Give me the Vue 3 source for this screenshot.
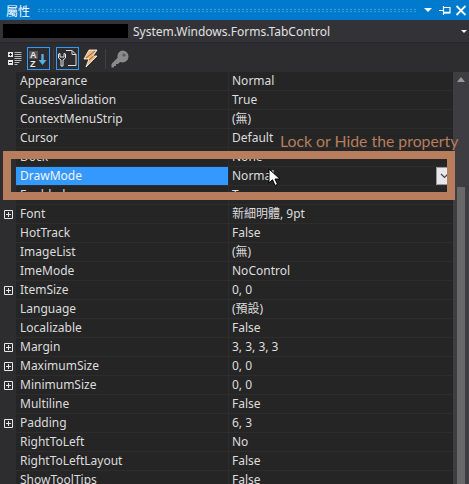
<script setup>
const rows = [
  ['Appearance', 'Normal'],
  ['CausesValidation', 'True'],
  ['ContextMenuStrip', '(無)'],
  ['Cursor', 'Default'],
  ['Dock', 'None'],
  ['DrawMode', 'Normal', false, true],
  ['Enabled', 'True'],
  ['Font', '新細明體, 9pt', true],
  ['HotTrack', 'False'],
  ['ImageList', '(無)'],
  ['ImeMode', 'NoControl'],
  ['ItemSize', '0, 0', true],
  ['Language', '(預設)'],
  ['Localizable', 'False'],
  ['Margin', '3, 3, 3, 3', true],
  ['MaximumSize', '0, 0', true],
  ['MinimumSize', '0, 0', true],
  ['Multiline', 'False'],
  ['Padding', '6, 3', true],
  ['RightToLeft', 'No'],
  ['RightToLeftLayout', 'False'],
  ['ShowToolTips', 'False'],
]
</script>

<template>
  <div class="panel">
    <header class="title">
      <span class="title-text">屬性</span>
      <span class="grip"></span>
      <svg class="tb-icons" width="42" height="13" viewBox="0 0 42 13">
        <path d="M0 4h8L4 8z" fill="#fff" />
        <path d="M15 6.500h4M19.500 2v9M19.500 3.500h6.500v5.500h-6.500" fill="none" stroke="#fff" stroke-width="1.200" />
        <path d="M20 8.500h6" stroke="#fff" stroke-width="1.500" />
        <path d="M32.500 2l9 9M41.500 2l-9 9" fill="none" stroke="#fff" stroke-width="1.800" />
      </svg>
    </header>
    <div class="combo">
      <span class="redact"></span>
      <span class="combo-text">System.Windows.Forms.TabControl</span>
      <svg class="combo-arrow" width="6" height="3" viewBox="0 0 6 3"><path d="M0 0h6L3 3z" fill="#f1f1f1" /></svg>
    </div>
    <div class="toolbar">
      <svg class="ico" width="16" height="16" viewBox="0 0 16 16">
        <path d="M0 1h5v5H0zM0 9h5v5H0z" fill="#e6e6e6" />
        <path d="M1 3.500h3M2.500 2v3M1 11.500h3" stroke="#222" />
        <path d="M6.500 1.500h7M6.500 3.500h7M6.500 5.500h7M6.500 7.500h7M6.500 9.500h7M6.500 11.500h5M6.500 13.500h3" stroke="#b8b8b8" />
      </svg>
      <span class="btn first">
        <svg width="19" height="18" viewBox="0 0 19 18">
          <rect x="0" y="1" width="9" height="8" fill="#555" />
          <text x="1" y="16" class="az">
            <tspan x="1" y="8">A</tspan>
            <tspan x="1" y="16.500">Z</tspan>
          </text>
          <path d="M13.500 4v7" stroke="#55aee8" stroke-width="2.400" />
          <path d="M9.500 10h8l-4 5z" fill="#55aee8" />
        </svg>
      </span>
      <i class="sep first-sep"></i>
      <span class="btn">
        <svg width="21" height="19" viewBox="0 0 21 19">
          <path d="M9 1.500h6l4 4v11h-8" fill="none" stroke="#ddd" />
          <path d="M15 1.500v4h4" fill="none" stroke="#ddd" />
          <path d="M1.500 5v4l2.500 2v6h2v-6L8.500 9V5L7 4.500v3.500H3V4.500z" fill="#2d2d30" stroke="#e6e6e6" />
        </svg>
      </span>
      <svg class="ico bolt" width="15" height="19" viewBox="0 0 15 19">
        <path d="M6 1h8l-4 6h4L3 18l3-8H1z" fill="#f2b774" stroke="#fff" stroke-width=".8" />
        <path d="M3 9l9-7M6 11l7-6" stroke="#2d2d30" stroke-width=".6" />
      </svg>
      <i class="sep"></i>
      <svg class="ico key" width="18" height="18" viewBox="0 0 18 18">
        <path d="M11.500 0.500a6 6 0 0 1 0 12c-.9 0-1.700-.2-2.400-.5L7 14H5v2H3v1.500H0.500V14l6-6.200a6 6 0 0 1 5-7.300z" fill="#8a8a8a" />
        <circle cx="13" cy="5" r="1.600" fill="#5a5a5a" />
      </svg>
    </div>
    <div class="body">
      <div class="grid">
        <div v-for="r in rows" :key="r[0]" class="row">
          <span class="gutter">
            <svg v-if="r[2]" width="9" height="9" viewBox="0 0 9 9">
              <path d="M.5.500h8v8h-8z" fill="none" stroke="#e6e6e6" />
              <path d="M2 4.500h5M4.500 2v5" stroke="#e6e6e6" />
            </svg>
          </span>
          <span class="name" :class="{ selected: r[3] }">{{ r[0] }}</span>
          <span class="value">{{ r[1] }}</span>
        </div>
        <span class="dropdown">
          <svg width="9" height="6" viewBox="0 0 9 6"><path d="M1 1l3.500 3.500L8 1" fill="none" stroke="#444" stroke-width="1.200" /></svg>
        </span>
      </div>
      <div class="scroll">
        <svg class="up" width="8" height="5" viewBox="0 0 8 5"><path d="M4 0L8 5H0z" fill="#999" /></svg>
        <div class="thumb"></div>
      </div>
      <div class="note-box"></div>
      <span class="note-text">Lock or Hide the property</span>
      <svg class="cursor" width="13" height="19" viewBox="0 0 13 19">
        <path d="M1 1v14l3.500-3.200L7 17.500l2.500-1.200L7 11h5z" fill="#fff" stroke="#000" />
      </svg>
    </div>
  </div>
</template>

<style>
html, body { margin: 0; background: #2d2d30; }
</style>

<style scoped>
.panel {
  width: 469px;
  height: 484px;
  overflow: hidden;
  background: #2d2d30;
  display: flex;
  flex-direction: column;
  font-family: "Noto Sans", "Noto Sans CJK TC", sans-serif;
  font-size: 12px;
  color: #f1f1f1;
}
.title {
  height: 20px;
  flex: none;
  background: #007acc;
  display: flex;
  align-items: center;
  padding: 0 3px 0 6px;
  gap: 7px;
}
.title-text { font-family: "Noto Sans CJK TC", sans-serif; font-size: 12px; color: #fff; }
.grip {
  flex: 1;
  height: 5px;
  background-image: radial-gradient(#4da6dd 0.6px, transparent 0.7px);
  background-size: 4px 2.500px;
}
.tb-icons { flex: none; }
.combo {
  height: 23px;
  flex: none;
  margin-bottom: 2px;
  background: #333337;
  border-bottom: 1px solid #26262a;
  box-sizing: border-box;
  display: flex;
  align-items: center;
  padding-left: 3px;
}
.redact { width: 125px; height: 14px; background: #000; flex: none; }
.combo-text { margin-left: 5px; font-size: 12px; color: #e0e0e0; }
.combo-arrow { margin-left: auto; margin-right: 2px; }
.toolbar {
  height: 27px;
  flex: none;
  display: flex;
  align-items: center;
  padding-left: 8px;
  background: #2d2d30;
}
.ico { flex: none; display: block; }
.btn {
  width: 23px;
  height: 23px;
  box-sizing: border-box;
  border: 1px solid #3399ff;
  display: flex;
  align-items: center;
  justify-content: center;
  flex: none;
}
.btn.first { margin-left: 3px; }
.sep { width: 1px; height: 20px; background: #3f3f42; margin: 0 5px 0 7px; flex: none; }
.first-sep { margin: 0 2px 0 3px; }
.bolt { margin-left: 4px; }
.az { font: bold 9px "Liberation Sans", sans-serif; fill: #e8e8e8; }
.body { flex: 1; display: flex; position: relative; min-height: 0; }
.grid { width: 453px; position: relative; background: #2d2d30; }
.row {
  height: 19px;
  box-sizing: border-box;
  display: flex;
  background: #252526;
  border-bottom: 1px solid #2d2d30;
  line-height: 18px;
  color: #dcdcdc;
}
.gutter {
  width: 16px;
  flex: none;
  background: #2d2d30;
  display: flex;
  align-items: center;
  padding-left: 4px;
  box-sizing: border-box;
}
.name {
  width: 213px;
  flex: none;
  padding-left: 4px;
  box-sizing: border-box;
  border-right: 1px solid #2d2d30;
}
.name.selected { background: #3399ff; color: #f4f4f4; background-clip: padding-box; }
.value { padding-left: 3px; white-space: nowrap; }
.dropdown {
  position: absolute;
  left: 436px;
  top: 95px;
  width: 17px;
  height: 18px;
  box-sizing: border-box;
  background: #e8e8ec;
  border: 1px solid #999;
  display: flex;
  align-items: center;
  justify-content: center;
}
.scroll {
  width: 16px;
  flex: none;
  background: #3e3e42;
  display: flex;
  flex-direction: column;
  align-items: center;
}
.up { margin-top: 5px; flex: none; }
.thumb { width: 8px; flex: 1; margin-top: 105px; background: #686868; }
.note-box {
  position: absolute;
  left: 3px;
  top: 79px;
  width: 452px;
  height: 49px;
  box-sizing: border-box;
  border: 8px solid #b77d5c;
  pointer-events: none;
}
.note-text {
  position: absolute;
  left: 280px;
  top: 59px;
  font-family: Lato, sans-serif;
  font-size: 15.800px;
  line-height: 20px;
  color: #b77d5c;
  white-space: nowrap;
}
.cursor { position: absolute; left: 268px; top: 96px; }
</style>
